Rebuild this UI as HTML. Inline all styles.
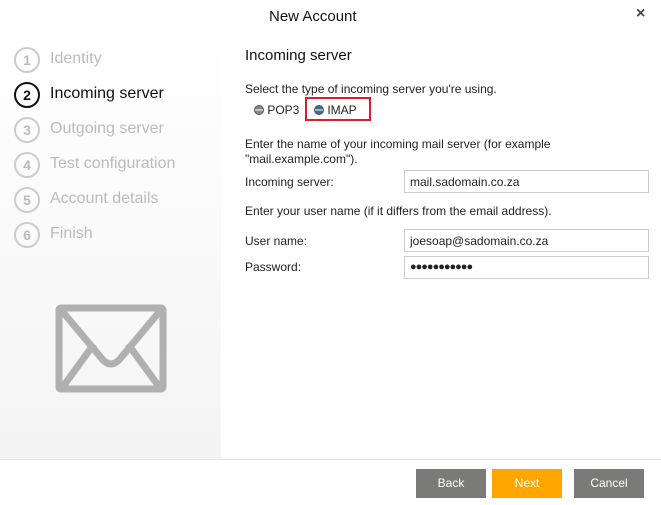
<!DOCTYPE html>
<html><head><style>
*{margin:0;padding:0;box-sizing:border-box}
body{width:661px;height:505px;background:#fff;font-family:"Liberation Sans",sans-serif;position:relative;overflow:hidden;color:#222}
.a{position:absolute;white-space:nowrap}
.side{position:absolute;left:0;top:38px;width:221px;height:421px;background:linear-gradient(#fff,#f4f4f4)}
.step{position:absolute;left:14px;width:200px;white-space:nowrap;font-size:16px;color:#bbb;height:26px;line-height:24px}
.step .c{position:absolute;left:0;top:0;width:26px;height:26px;border:2px solid #ccc;border-radius:50%;text-align:center;font-weight:bold;font-size:14px;line-height:22px}
.step .t{position:absolute;left:36px;top:0}
.step.on{color:#111}.step.on .c{border-color:#111}
.f{font-size:12px;color:#222}
.in{position:absolute;left:404px;width:245px;height:23px;border:1px solid #ccc;font-size:12px;padding:4px 5px}
.btn{position:absolute;top:469px;width:70px;height:29px;color:#fff;font-size:12px;text-align:center;line-height:29px;background:#7a7a76}
.rad{display:inline-block;width:10px;height:10px;border-radius:50%;border:1px solid #555;background:linear-gradient(#888 45%,#fff 45%,#fff 55%,#888 55%);vertical-align:-1px}
</style></head><body>
<div class="a" style="left:269px;top:8px;font-size:15px;color:#111">New Account</div>
<div class="a" style="left:636px;top:5px;font-size:16px;font-weight:bold;color:#444">×</div>
<div class="side">
<svg style="position:absolute;left:55px;top:266px" width="112" height="89" viewBox="0 0 112 89"><rect x="4" y="4" width="104" height="81" rx="2" fill="none" stroke="#b0b0b0" stroke-width="7"/><path d="M7 7 L48 56 Q56 64 64 56 L105 7" fill="none" stroke="#b0b0b0" stroke-width="7"/><path d="M7 84 L39 40 M105 84 L73 40" stroke="#b0b0b0" stroke-width="7"/></svg>
</div>
<div class="step" style="top:47px"><span class="c">1</span><span class="t">Identity</span></div>
<div class="step on" style="top:82px"><span class="c">2</span><span class="t">Incoming server</span></div>
<div class="step" style="top:117px"><span class="c">3</span><span class="t">Outgoing server</span></div>
<div class="step" style="top:152px"><span class="c">4</span><span class="t">Test configuration</span></div>
<div class="step" style="top:187px"><span class="c">5</span><span class="t">Account details</span></div>
<div class="step" style="top:222px"><span class="c">6</span><span class="t">Finish</span></div>
<div class="a" style="left:245px;top:47px;font-size:15px;color:#111">Incoming server</div>
<div class="a f" style="left:245px;top:82px">Select the type of incoming server you're using.</div>
<div class="a f" style="left:254px;top:103px"><span class="rad"></span> POP3</div>
<div class="a" style="left:305px;top:97px;width:66px;height:24px;border:2px solid #d9202a"></div>
<div class="a f" style="left:314px;top:103px"><span class="rad" style="background:linear-gradient(#3a6d9a 45%,#fff 45%,#fff 55%,#3a6d9a 55%)"></span> IMAP</div>
<div class="a f" style="left:245px;top:137px;line-height:15px">Enter the name of your incoming mail server (for example<br>"mail.example.com").</div>
<div class="a f" style="left:245px;top:175px">Incoming server:</div>
<div class="in" style="top:170px">mail.sadomain.co.za</div>
<div class="a f" style="left:245px;top:204px">Enter your user name (if it differs from the email address).</div>
<div class="a f" style="left:245px;top:234px">User name:</div>
<div class="in" style="top:229px">joesoap@sadomain.co.za</div>
<div class="a f" style="left:245px;top:260px">Password:</div>
<div class="in" style="top:256px;font-size:11px;letter-spacing:-1px">●●●●●●●●●●●</div>
<div class="a" style="left:0;top:459px;width:661px;height:1px;background:#e0e0e0"></div>
<div class="btn" style="left:416px">Back</div>
<div class="btn" style="left:492px;background:#ffa500">Next</div>
<div class="btn" style="left:574px">Cancel</div>
</body></html>
